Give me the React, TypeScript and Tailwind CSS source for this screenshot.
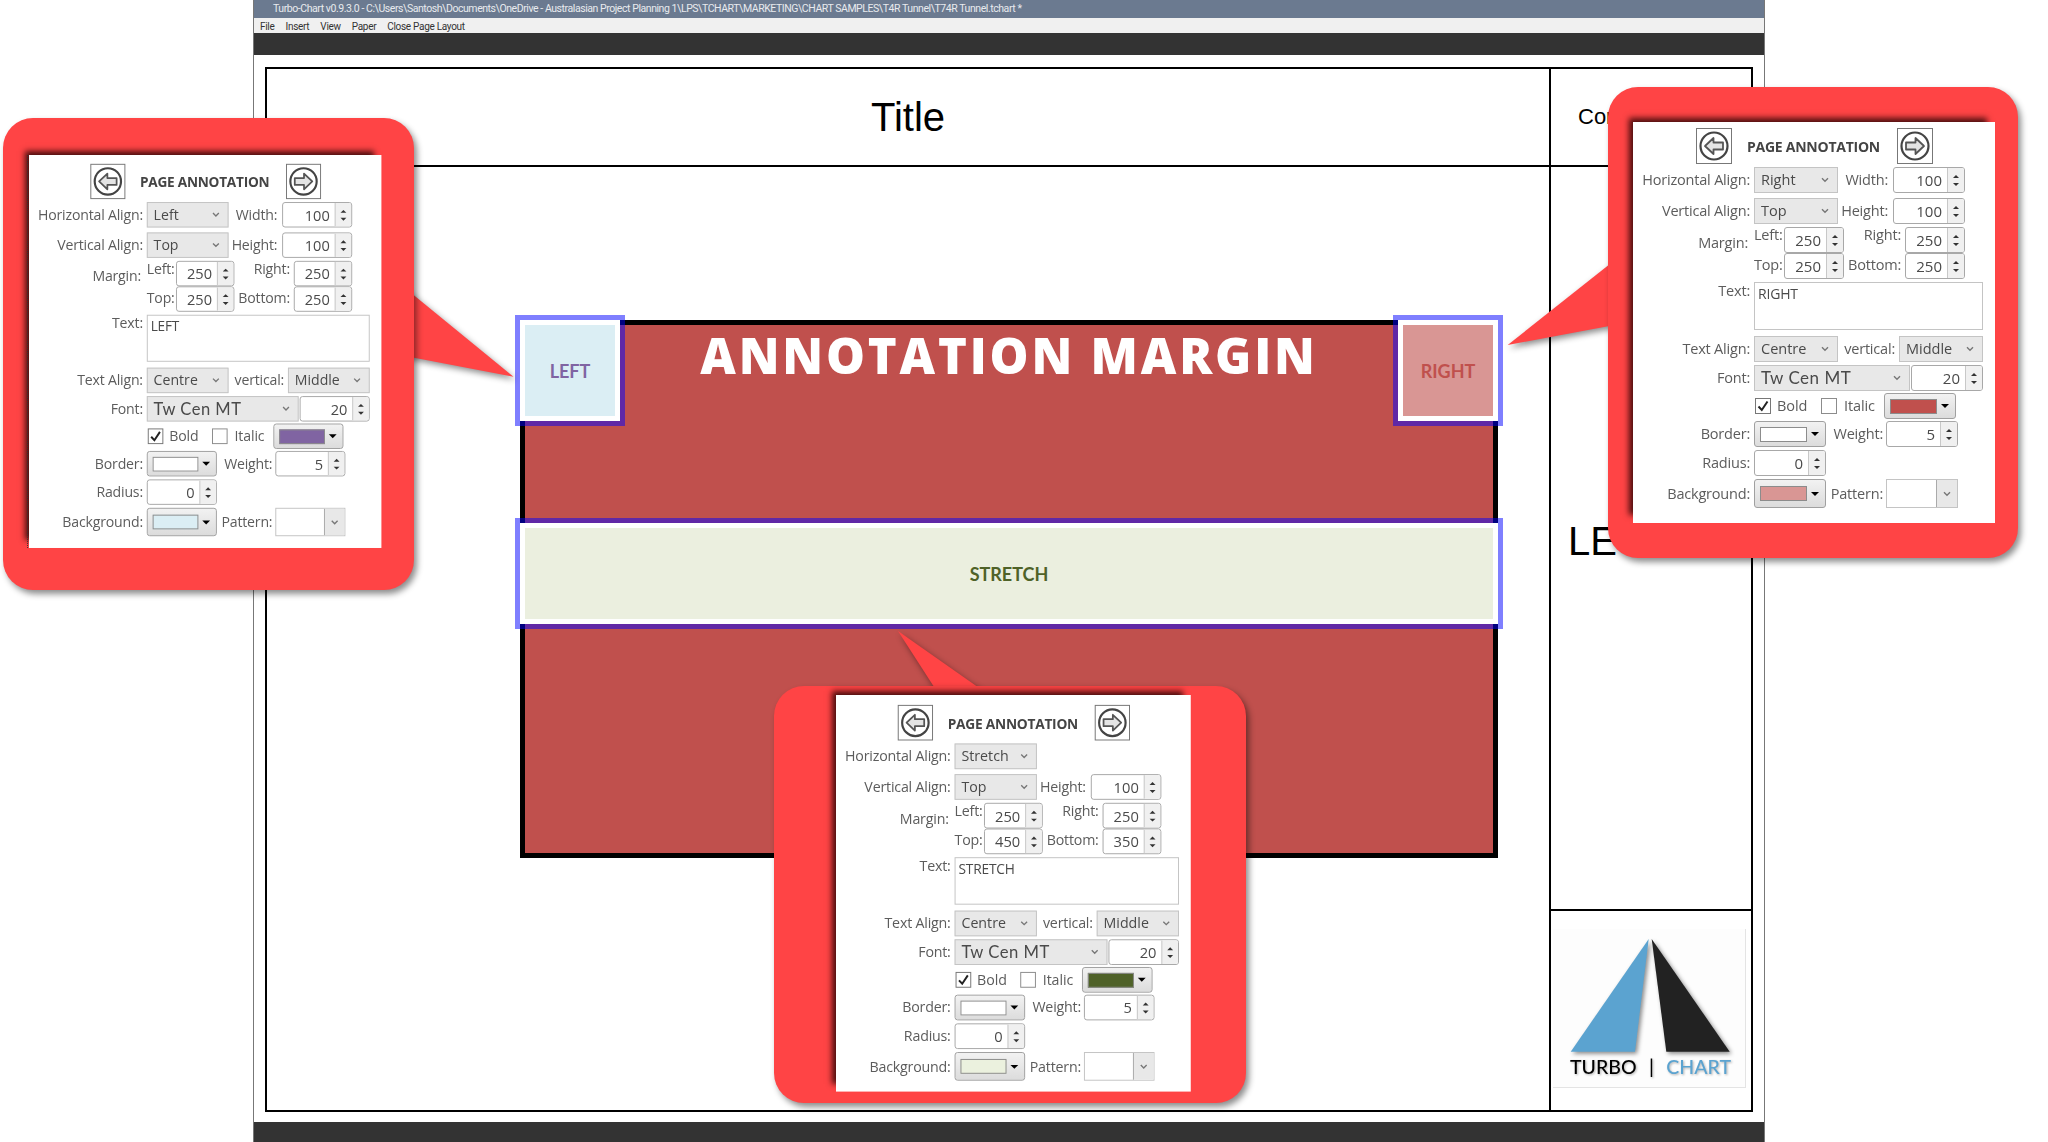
const Chevron = () => (
  <svg width="8" height="6" viewBox="0 0 8 6" className="shrink-0">
    <path d="M1 1.2 L4 4.2 L7 1.2" fill="none" stroke="#777" strokeWidth="1.4" />
  </svg>
);

const Combo = ({ value, className, big }: { value: string; className: string; big?: boolean }) => (
  <div className={`flex h-full items-center justify-between border border-[#c4c4c4] bg-[#e8e8e8] pl-[6px] pr-[8px] text-[#4a4a4a] ${className}`}>
    <span className={big ? "font-['Lato',sans-serif] text-[17px] tracking-[0.5px]" : "text-[14.5px]"}>{value}</span>
    <Chevron />
  </div>
);

const Spinner = ({ value, className }: { value: string; className: string }) => (
  <div className={`flex h-full overflow-hidden rounded-[3px] border border-[#a8a8a8] bg-white ${className}`}>
    <div className="flex-1 pr-[5px] text-right text-[15px] leading-[24px] text-[#4a4a4a]">{value}</div>
    <div className="flex w-[17px] flex-col items-center justify-center gap-[5px] border-l border-[#c8c8c8] bg-[#f0f0f0]">
      <div className="h-0 w-0 border-x-[3px] border-b-[3px] border-x-transparent border-b-[#333]" />
      <div className="h-0 w-0 border-x-[3px] border-t-[3px] border-x-transparent border-t-[#333]" />
    </div>
  </div>
);

const ColorButton = ({ swatch, className }: { swatch: string; className: string }) => (
  <div className={`flex h-full w-[72px] items-center justify-between rounded-[3px] border border-[#a0a0a0] bg-gradient-to-b from-[#f2f2f2] to-[#dcdcdc] pl-[5px] pr-[6px] ${className}`}>
    <div className={`h-[15px] w-[47px] border border-[#8c8c8c] ${swatch}`} />
    <div className="h-0 w-0 border-x-[4px] border-t-[4px] border-x-transparent border-t-black" />
  </div>
);

const Label = ({ text, className }: { text: string; className: string }) => (
  <div className={`shrink-0 text-right text-[14.5px] leading-[16px] tracking-[-0.2px] whitespace-nowrap text-[#5c5c5c] ${className}`}>{text}</div>
);

const Row = ({ label, className, children }: { label: string; className: string; children?: React.ReactNode }) => (
  <div className={`flex items-center ${className}`}>
    <Label text={label} className="w-[117px]" />
    <div className="ml-[4px] flex h-full items-center">{children}</div>
  </div>
);

const NavButton = ({ right }: { right?: boolean }) => (
  <div className="flex h-9 w-9 items-center justify-center border border-[#777] bg-white">
    <svg width="32" height="32" viewBox="0 0 32 32">
      <circle cx="16" cy="16" r="13.5" fill="#fff" stroke="#444" strokeWidth="2.2" />
      <path
        d={right ? "M25 16 L16.5 8 L16.5 12.5 L7 12.5 L7 19.5 L16.5 19.5 L16.5 24 Z" : "M7 16 L15.5 8 L15.5 12.5 L25 12.5 L25 19.5 L15.5 19.5 L15.5 24 Z"}
        fill="#e4e4e4"
        stroke="#555"
        strokeWidth="1.8"
        strokeLinejoin="round"
      />
    </svg>
  </div>
);

type PanelProps = {
  hAlign: string;
  text: string;
  top: string;
  bottom: string;
  fontColor: string;
  background: string;
  showWidth?: boolean;
  className: string;
};

const Panel = ({ hAlign, text, top, bottom, fontColor, background, showWidth, className }: PanelProps) => (
  <div className={`h-[401px] w-[362px] origin-top-left bg-white shadow-[-6px_-6px_6px_-2px_rgba(30,0,0,0.8)] ${className}`}>
    <div className="blur-[0.3px]">
      <div className="flex h-[42px] items-end pl-[63px]">
        <NavButton />
        <div className="ml-[15px] w-[136px] self-center pt-[6px] text-[14px] font-bold whitespace-nowrap tracking-[-0.25px] text-[#444]">PAGE ANNOTATION</div>
        <div className="ml-[14px]">
          <NavButton right />
        </div>
      </div>

      <Row label="Horizontal Align:" className="mt-[3px] h-[26px]">
        <Combo value={hAlign} className="w-[84px]" />
        {showWidth && (
          <>
            <Label text="Width:" className="w-[50px]" />
            <Spinner value="100" className="ml-[5px] w-[72px]" />
          </>
        )}
      </Row>
      <Row label="Vertical Align:" className="mt-[5px] h-[26px]">
        <Combo value="Top" className="w-[84px]" />
        <Label text="Height:" className="w-[50px]" />
        <Spinner value="100" className="ml-[5px] w-[72px]" />
      </Row>

      <div className="mt-[3px] flex h-[52px]">
        <Label text="Margin:" className="w-[115px] pt-[8px]" />
        <div className="ml-[6px] grid grid-cols-[30px_60px_61px_60px] grid-rows-[26px_26px]">
          <Label text="Left:" className="pr-[2px] text-left" />
          <Spinner value="250" className="w-[60px]" />
          <Label text="Right:" className="pr-[4px]" />
          <Spinner value="250" className="w-[60px]" />
          <Label text="Top:" className="pt-[4px] pr-[2px] text-left" />
          <Spinner value={top} className="w-[60px]" />
          <Label text="Bottom:" className="pt-[4px] pr-[4px]" />
          <Spinner value={bottom} className="w-[60px]" />
        </div>
      </div>

      <div className="mt-[3px] flex h-[48px]">
        <Label text="Text:" className="w-[117px] pt-[1px]" />
        <div className="ml-[4px] w-[229px] border border-[#c4c4c4] pl-[3px] pt-[2px] text-[14px] leading-[18px] tracking-[-0.2px] text-[#4a4a4a]">{text}</div>
      </div>

      <Row label="Text Align:" className="mt-[6px] h-[26px]">
        <Combo value="Centre" className="w-[84px]" />
        <Label text="vertical:" className="w-[57px]" />
        <Combo value="Middle" className="ml-[4px] w-[84px]" />
      </Row>
      <Row label="Font:" className="mt-[3px] h-[26px]">
        <Combo value="Tw Cen MT" big className="w-[156px]" />
        <Spinner value="20" className="ml-[1px] w-[72px]" />
      </Row>

      <div className="mt-[2px] flex h-[26px] items-center pl-[122px] text-[14.5px] tracking-[-0.1px] text-[#5c5c5c]">
        <div className="flex h-[16px] w-[16px] items-center justify-center border border-[#777] bg-white">
          <svg width="14" height="14" viewBox="0 0 14 14">
            <path d="M2.5 7.5 L5.8 11 L11.5 2.5" fill="none" stroke="#222" strokeWidth="2" />
          </svg>
        </div>
        <div className="ml-[6px] w-[38px]">Bold</div>
        <div className="ml-[6px] h-[16px] w-[16px] border border-[#8c8c8c] bg-white" />
        <div className="ml-[7px] w-[35px]">Italic</div>
        <ColorButton swatch={fontColor} className="ml-[5px]" />
      </div>

      <Row label="Border:" className="mt-[2px] h-[26px]">
        <ColorButton swatch="bg-white" className="" />
        <Label text="Weight:" className="w-[57px]" />
        <Spinner value="5" className="ml-[3px] w-[72px]" />
      </Row>
      <Row label="Radius:" className="mt-[3px] h-[26px]">
        <Spinner value="0" className="w-[72px]" />
      </Row>
      <Row label="Background:" className="mt-[3px] h-[29px]">
        <ColorButton swatch={background} className="" />
        <Label text="Pattern:" className="w-[57px]" />
        <div className="ml-[3px] flex h-full w-[72px] border border-[#c4c4c4] bg-white">
          <div className="flex-1" />
          <div className="flex w-[21px] items-center justify-center border-l border-[#aaa] bg-[#e8e8e8]">
            <Chevron />
          </div>
        </div>
      </Row>
    </div>
  </div>
);

const Annotation = ({ text, className, textColor, fill }: { text: string; className: string; textColor: string; fill: string }) => (
  <div className={`border-[5px] border-[rgba(0,0,255,0.5)] bg-clip-padding ${className}`}>
    <div className={`flex h-full items-center justify-center border-[5px] border-white pt-[2px] font-['Lato',sans-serif] text-[18px] font-bold ${fill} ${textColor}`}>
      {text}
    </div>
  </div>
);

const Callouts = () => (
  <>
    <svg className="absolute left-0 top-0 drop-shadow-[2px_3px_3px_rgba(0,0,0,0.45)]" width="2048" height="1142">
      <polygon points="405,288 513.5,376.7 405,356" fill="#ff4445" />
      <polygon points="1620,256 1507.7,345 1620,324" fill="#ff4445" />
      <polygon points="898,631 936,690 982,690" fill="#ff4445" />
    </svg>

    <div className="absolute left-[3px] top-[118px] h-[472px] w-[411px] rounded-[30px] bg-[#ff4445] pl-[26px] pt-[37px] shadow-[3px_4px_6px_rgba(0,0,0,0.45)]">
      <Panel
        hAlign="Left"
        text="LEFT"
        top="250"
        bottom="250"
        fontColor="bg-[#8064a2]"
        background="bg-[#dbeef4]"
        showWidth
        className="relative scale-x-[0.9735] scale-y-[0.98] pt-[3px] before:absolute before:inset-y-0 before:-left-[2px] before:w-[2px] before:border-l before:border-dotted before:border-[#333] before:content-['']"
      />
    </div>

    <div className="absolute left-[1608px] top-[87px] h-[471px] w-[410px] rounded-[30px] bg-[#ff4445] pl-[25px] pt-[35px] shadow-[3px_4px_6px_rgba(0,0,0,0.45)]">
      <Panel hAlign="Right" text="RIGHT" top="250" bottom="250" fontColor="bg-[#c0504d]" background="bg-[#d99694]" showWidth className="" />
    </div>

    <div className="absolute left-[774px] top-[686px] h-[417px] w-[472px] rounded-[30px] bg-[#ff4445] pl-[62px] pt-[9px] shadow-[3px_4px_6px_rgba(0,0,0,0.45)]">
      <Panel
        hAlign="Stretch"
        text="STRETCH"
        top="450"
        bottom="350"
        fontColor="bg-[#4f6228]"
        background="bg-[#ebf1de]"
        className="scale-x-[0.98] scale-y-[0.989] pt-[4px]"
      />
    </div>
  </>
);

const Logo = () => (
  <div className="ml-[2px] mt-[18px] flex h-[159px] w-[193px] flex-col items-center border-b border-r border-[#e4e4e4] bg-[#fdfdfd] pt-[10px]">
    <svg width="193" height="115" viewBox="0 0 193 115" className="drop-shadow-[2px_2px_2px_rgba(0,0,0,0.45)]">
      <polygon points="95.7,0 17.7,112.7 82,112.7" fill="#5ba3d0" />
      <polygon points="98.7,0 113.3,112.7 176.7,112.7" fill="#222" />
    </svg>
    <div className="ml-[3px] mt-[3px] flex w-[161px] items-center justify-between font-['Lato',sans-serif] text-[19.5px] font-medium leading-[20px] drop-shadow-[1px_1px_1px_rgba(0,0,0,0.3)]">
      <span className="text-black">TURBO</span>
      <span className="text-black">|</span>
      <span className="text-[#5ba3d0]">CHART</span>
    </div>
  </div>
);

export default function App() {
  return (
    <div className="relative h-[1142px] w-[2048px] overflow-hidden bg-white font-['Open_Sans',sans-serif]">
      <div className="ml-[253px] flex h-full w-[1512px] flex-col border-x border-[#777]">
        <div className="flex h-[18px] items-center bg-[#6b7a90] pl-[19px] font-['Roboto',sans-serif] text-[10.5px] tracking-[-0.44px] whitespace-nowrap text-[#e8eaee]">
          Turbo-Chart v0.9.3.0 - C:\Users\Santosh\Documents\OneDrive - Australasian Project Planning 1\LPS\TCHART\MARKETING\CHART SAMPLES\T4R Tunnel\T74R Tunnel.tchart *
        </div>
        <div className="flex h-[15px] items-center gap-[11px] bg-[#f0f0f0] pl-[6px] pt-[1px] font-['Roboto',sans-serif] text-[10px] tracking-[-0.3px] text-[#333]">
          <span>File</span>
          <span>Insert</span>
          <span>View</span>
          <span>Paper</span>
          <span>Close Page Layout</span>
        </div>
        <div className="h-[22px] bg-[#333]" />

        <div className="flex-1 px-[11px] pb-[10px] pt-[12px]">
          <div className="flex h-full border-2 border-black font-['Liberation_Sans',sans-serif]">
            <div className="flex-1">
              <div className="flex h-[98px] items-center border-b-2 border-black pl-[604px] text-[40px] text-black">Title</div>
              <div className="ml-[253px] mt-[153px] h-[538px] w-[978px] border-[5px] border-black bg-[#c0504d]">
                <div className="-mx-[10px] -mt-[10px] flex items-start">
                  <Annotation text="LEFT" className="h-[111px] w-[110px] shrink-0" fill="bg-[#dbeef4]" textColor="text-[#8064a2]" />
                  <div className="flex-1 pt-[4px] text-center font-['Open_Sans',sans-serif] text-[49px] font-extrabold tracking-[2.8px] whitespace-nowrap text-white">ANNOTATION MARGIN</div>
                  <Annotation text="RIGHT" className="h-[111px] w-[110px] shrink-0" fill="bg-[#d99694]" textColor="text-[#c0504d]" />
                </div>
                <Annotation text="STRETCH" className="-mx-[10px] mt-[92px] h-[111px]" fill="bg-[#ebefdf]" textColor="text-[#4f6228]" />
              </div>
            </div>
            <div className="flex w-[202px] flex-col border-l-2 border-black">
              <div className="h-[98px] border-b-2 border-black pl-[27px] pt-[31px] text-[22px] text-black">Cor</div>
              <div className="flex-1 pl-[17px] pt-[351px] text-[40px] leading-[46px] text-black">LE</div>
              <div className="h-[201px] border-t-2 border-black">
                <Logo />
              </div>
            </div>
          </div>
        </div>

        <div className="h-[20px] bg-[#333]" />
      </div>
      <Callouts />
    </div>
  );
}
